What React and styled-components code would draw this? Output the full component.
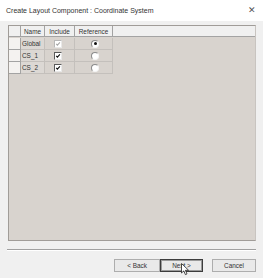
import React from 'react';
import styled, { createGlobalStyle } from 'styled-components';

const GlobalStyle = createGlobalStyle`
  html, body {
    margin: 0;
    padding: 0;
    background: #f0f0f0;
  }
  * {
    box-sizing: border-box;
  }
`;

const Dialog = styled.div`
  position: relative;
  width: 263px;
  height: 278px;
  background: #f0f0f0;
  font-family: 'Liberation Sans', Arial, sans-serif;
  color: #1a1a1a;
  display: flex;
  flex-direction: column;
  overflow: hidden;
`;

const TitleBar = styled.div`
  height: 21px;
  background: #ffffff;
  display: flex;
  align-items: center;
  justify-content: space-between;
  padding: 0 6px 0 6px;
  font-size: 7px;
  color: #333;
`;

const Close = styled.span`
  font-size: 9px;
  color: #555;
  line-height: 1;
  margin-right: 1px;
  font-weight: 300;
`;

const Body = styled.div`
  padding: 4px 7px 0 8px;
`;

const Panel = styled.div`
  height: 216px;
  background: #d8d3ce;
  border: 1px solid #a09c98;
  border-right-color: #c8c4c0;
`;

const Grid = styled.div`
  display: grid;
  grid-template-columns: 12px 24px 30px 38px 1fr;
  grid-auto-rows: 12px;
  font-size: 6.4px;
`;

const HeadCell = styled.div`
  background: #f0f0f0;
  border-right: 1px solid #a3a3a3;
  border-bottom: 1px solid #a3a3a3;
  display: flex;
  align-items: center;
  justify-content: ${p => (p.$left ? 'flex-start' : 'center')};
  padding-left: ${p => (p.$left ? '3px' : '0')};
  height: 11px;
  color: #333;
`;

const Filler = styled(HeadCell)`
  border-right: none;
`;

const Selector = styled.div`
  background: #f4f2f0;
  border-right: 1px solid #a3a3a3;
  border-bottom: 1px solid #a3a3a3;
`;

const Cell = styled.div`
  border-right: 1px solid #c4c0bc;
  border-bottom: 1px solid #c4c0bc;
  display: flex;
  align-items: center;
  justify-content: ${p => (p.$left ? 'flex-start' : 'center')};
  padding-left: ${p => (p.$left ? '1px' : '0')};
  background: ${p => (p.$name ? '#dcd8d4' : 'transparent')};
  color: #333;
`;

const Empty = styled.div``;

const Box = styled.span`
  width: 8px;
  height: 8px;
  background: #ffffff;
  border: 1px solid ${p => (p.$disabled ? '#b8b8b8' : '#5a5a5a')};
  border-right-color: #e8e8e8;
  border-bottom-color: #e8e8e8;
  display: flex;
  align-items: center;
  justify-content: center;
  margin-right: 4px;
`;

const Radio = styled.span`
  width: 8px;
  height: 8px;
  border-radius: 50%;
  background: #ffffff;
  border: 1px solid #8a8a8a;
  border-right-color: #f4f4f4;
  border-bottom-color: #f4f4f4;
  display: flex;
  align-items: center;
  justify-content: center;
  margin-left: 3px;

  &::after {
    content: '';
    width: 3px;
    height: 3px;
    border-radius: 50%;
    background: ${p => (p.$on ? '#111' : 'transparent')};
  }
`;

const Separator = styled.div`
  margin: 8px 7px 0 7px;
  height: 2px;
  border-top: 1px solid #a0a0a0;
  border-bottom: 1px solid #ffffff;
`;

const Buttons = styled.div`
  display: flex;
  padding: 8px 7px 0 114px;
`;

const Button = styled.div`
  width: ${p => p.$w}px;
  height: 13px;
  margin-right: ${p => p.$gap || 0}px;
  border: 1px solid ${p => (p.$focus ? '#3c3c3c' : '#adadad')};
  background: #e9e9e9;
  display: flex;
  align-items: center;
  justify-content: center;
  font-size: 6.4px;
  color: #333;
  box-shadow: ${p => (p.$focus ? 'inset 0 0 0 1px #9a9a9a' : 'none')};
`;

const Cursor = styled.svg`
  position: absolute;
  left: 181px;
  top: 263px;
`;

const Check = ({ disabled }) => (
  <svg width="6" height="6" viewBox="0 0 6 6">
    <path
      d="M1.2 2.9 L2.4 4.1 L4.9 1.4"
      fill="none"
      stroke={disabled ? '#a8a8a8' : '#111'}
      strokeWidth="1.1"
    />
  </svg>
);

const rows = [
  { name: 'Global', disabled: true, ref: true },
  { name: 'CS_1', disabled: false, ref: false },
  { name: 'CS_2', disabled: false, ref: false },
];

const App = () => (
  <Dialog>
    <GlobalStyle />
    <TitleBar>
      <span>Create Layout Component : Coordinate System</span>
      <Close>✕</Close>
    </TitleBar>
    <Body>
      <Panel>
        <Grid>
          <HeadCell />
          <HeadCell>Name</HeadCell>
          <HeadCell>Include</HeadCell>
          <HeadCell>Reference</HeadCell>
          <Filler />
          {rows.map(r => (
            <React.Fragment key={r.name}>
              <Selector />
              <Cell $left $name>{r.name}</Cell>
              <Cell>
                <Box $disabled={r.disabled}>
                  <Check disabled={r.disabled} />
                </Box>
              </Cell>
              <Cell>
                <Radio $on={r.ref} />
              </Cell>
              <Empty />
            </React.Fragment>
          ))}
        </Grid>
      </Panel>
    </Body>
    <Separator />
    <Buttons>
      <Button $w={46}>&lt; Back</Button>
      <Button $w={43} $gap={9} $focus>Next &gt;</Button>
      <Button $w={44}>Cancel</Button>
    </Buttons>
    <Cursor width="9" height="13" viewBox="0 0 9 13">
      <path d="M0.5 0.5 L0.5 10 L2.8 7.9 L4.4 11.6 L6 10.9 L4.4 7.3 L7.6 7.3 Z" fill="#fff" stroke="#222" strokeWidth="0.8" />
    </Cursor>
  </Dialog>
);

export default App;
